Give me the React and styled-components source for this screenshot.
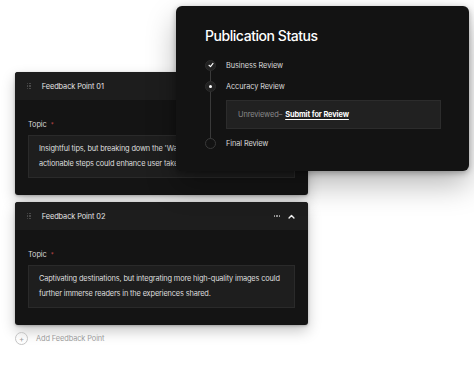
import React from 'react';
import styled, { createGlobalStyle } from 'styled-components';

const GlobalStyle = createGlobalStyle`
	html, body {
		margin: 0;
		padding: 0;
		background: #ffffff;
		font-family: Inter, 'Noto Sans', sans-serif;
		-webkit-font-smoothing: antialiased;
	}
`;

const Stage = styled.div`
	position: relative;
	width: 474px;
	height: 366px;
	overflow: hidden;
	background: #ffffff;
`;

const Column = styled.div`
	display: flex;
	flex-direction: column;
	gap: 7px;
	padding: 72px 0 0 15px;
	width: 293px;
`;

const Card = styled.div`
	background: #141414;
	border-radius: 3px;
	overflow: hidden;
	box-shadow: 0 6px 14px rgba(0, 0, 0, 0.22), 0 1px 3px rgba(0, 0, 0, 0.25);
`;

const CardHeader = styled.div`
	height: 28px;
	display: flex;
	align-items: center;
	padding: 0 13px 0 10px;
	background: #1d1d1d;
	color: #e4e4e4;
	font-size: 7.4px;
	letter-spacing: -0.1px;
`;

const Handle = styled.div`
	display: grid;
	grid-template-columns: repeat(2, 1.3px);
	gap: 1.2px 1.2px;
	margin-right: 11px;
	margin-left: 2px;

	span {
		width: 1.3px;
		height: 1.3px;
		border-radius: 50%;
		background: #505050;
	}
`;

const HeaderTitle = styled.div`
	flex: 1;
`;

const HeaderActions = styled.div`
	display: flex;
	align-items: center;
	gap: 8px;
`;

const More = styled.div`
	display: flex;
	gap: 1px;

	span {
		width: 1.4px;
		height: 1.4px;
		border-radius: 50%;
		background: #a8a8a8;
	}
`;

const CardBody = styled.div`
	padding: 18px 13px 17px 13px;
`;

const Label = styled.div`
	display: flex;
	align-items: center;
	height: 12px;
	font-size: 7.4px;
	color: #d6d6d6;
	margin-bottom: 5px;
	letter-spacing: -0.1px;

	em {
		font-style: normal;
		color: #c24a4c;
		margin-left: 4px;
		font-size: 6px;
	}
`;

const TextBox = styled.div`
	height: 43px;
	box-sizing: border-box;
	background: #1e1e1e;
	border: 1px solid #2a2a2a;
	padding: 5px 10px;
	font-size: 7.4px;
	letter-spacing: -0.15px;
	line-height: 15px;
	color: #dedede;
	white-space: nowrap;
	overflow: hidden;
`;

const AddRow = styled.div`
	display: flex;
	align-items: center;
	gap: 8px;
	color: #9a9a9a;
	font-size: 7.4px;
	letter-spacing: -0.1px;
`;

const AddCircle = styled.div`
	width: 13px;
	height: 13px;
	box-sizing: border-box;
	border-radius: 50%;
	border: 1px solid #c4c4c4;
	display: flex;
	align-items: center;
	justify-content: center;
	color: #9a9a9a;
	font-size: 8px;
	line-height: 1;
`;

const Panel = styled.div`
	position: absolute;
	left: 176px;
	top: 6px;
	width: 293px;
	height: 165px;
	box-sizing: border-box;
	background: #131313;
	border-radius: 6px;
	padding: 21px 28px 0 29px;
	box-shadow: 0 14px 30px rgba(0, 0, 0, 0.28), 0 2px 6px rgba(0, 0, 0, 0.3);
	color: #ffffff;
`;

const PanelTitle = styled.div`
	font-size: 14px;
	font-weight: 500;
	letter-spacing: -0.45px;
	line-height: 18px;
	margin-bottom: 12px;
`;

const Steps = styled.div`
	position: relative;
	display: flex;
	flex-direction: column;
`;

const Rail = styled.div`
	position: absolute;
	left: 5px;
	top: 8px;
	bottom: 8px;
	width: 1px;
	background: #3a3a3a;
`;

const Step = styled.div`
	position: relative;
	display: flex;
	align-items: center;
	gap: 10px;
	height: 16px;
	margin-bottom: ${(p) => p.$gap || 0}px;
	font-size: 7.4px;
	letter-spacing: -0.1px;
	color: #d9d9d9;
`;

const Dot = styled.div`
	width: 11px;
	height: 11px;
	box-sizing: border-box;
	border-radius: 50%;
	background: ${(p) => (p.$state === 'todo' ? '#131313' : '#222222')};
	border: 1px solid ${(p) => (p.$state === 'todo' ? '#3a3a3a' : '#2c2c2c')};
	display: flex;
	align-items: center;
	justify-content: center;
	flex-shrink: 0;
`;

const Pip = styled.span`
	width: 3px;
	height: 3px;
	border-radius: 50%;
	background: #ffffff;
`;

const StatusBox = styled.div`
	margin: 0 0 6px 21px;
	height: 29px;
	box-sizing: border-box;
	background: #212121;
	border: 1px solid #2c2c2c;
	display: flex;
	align-items: center;
	padding-left: 11px;
	font-size: 7.4px;
	letter-spacing: -0.1px;
	color: #8a8a8a;

	a {
		color: #ffffff;
		font-weight: 700;
		text-decoration: underline;
		text-underline-offset: 1.5px;
		margin-left: 3px;
	}
`;

const Check = () => (
	<svg width="6" height="6" viewBox="0 0 12 12" fill="none">
		<path d="M2 6.5 L5 9.2 L10 2.8" stroke="#fff" strokeWidth="2.2" strokeLinecap="round" strokeLinejoin="round" />
	</svg>
);

const Chevron = () => (
	<svg width="7" height="5" viewBox="0 0 10 7" fill="none">
		<path d="M1.5 5.5 L5 2 L8.5 5.5" stroke="#f0f0f0" strokeWidth="2" strokeLinecap="round" strokeLinejoin="round" />
	</svg>
);

const DragHandle = () => (
	<Handle>
		{Array.from({ length: 6 }).map((_, i) => (
			<span key={i} />
		))}
	</Handle>
);

const FeedbackCard = ({ title, lines }) => (
	<Card>
		<CardHeader>
			<DragHandle />
			<HeaderTitle>{title}</HeaderTitle>
			<HeaderActions>
				<More>
					<span />
					<span />
					<span />
				</More>
				<Chevron />
			</HeaderActions>
		</CardHeader>
		<CardBody>
			<Label>
				Topic<em>*</em>
			</Label>
			<TextBox>
				{lines.map((l, i) => (
					<div key={i}>{l}</div>
				))}
			</TextBox>
		</CardBody>
	</Card>
);

export default function App() {
	return (
		<Stage>
			<GlobalStyle />
			<Column>
				<FeedbackCard
					title="Feedback Point 01"
					lines={[
						"Insightful tips, but breaking down the 'Water-Saving Tips' into",
						'actionable steps could enhance user takeaways and engagement.',
					]}
				/>
				<FeedbackCard
					title="Feedback Point 02"
					lines={[
						'Captivating destinations, but integrating more high-quality images could',
						'further immerse readers in the experiences shared.',
					]}
				/>
				<AddRow>
					<AddCircle>+</AddCircle>
					Add Feedback Point
				</AddRow>
			</Column>

			<Panel>
				<PanelTitle>Publication Status</PanelTitle>
				<Steps>
					<Rail />
					<Step $gap={5}>
						<Dot $state="done">
							<Check />
						</Dot>
						Business Review
					</Step>
					<Step $gap={6}>
						<Dot $state="active">
							<Pip />
						</Dot>
						Accuracy Review
					</Step>
					<StatusBox>
						Unreviewed–<a>Submit for Review</a>
					</StatusBox>
					<Step>
						<Dot $state="todo" />
						Final Review
					</Step>
				</Steps>
			</Panel>
		</Stage>
	);
}
